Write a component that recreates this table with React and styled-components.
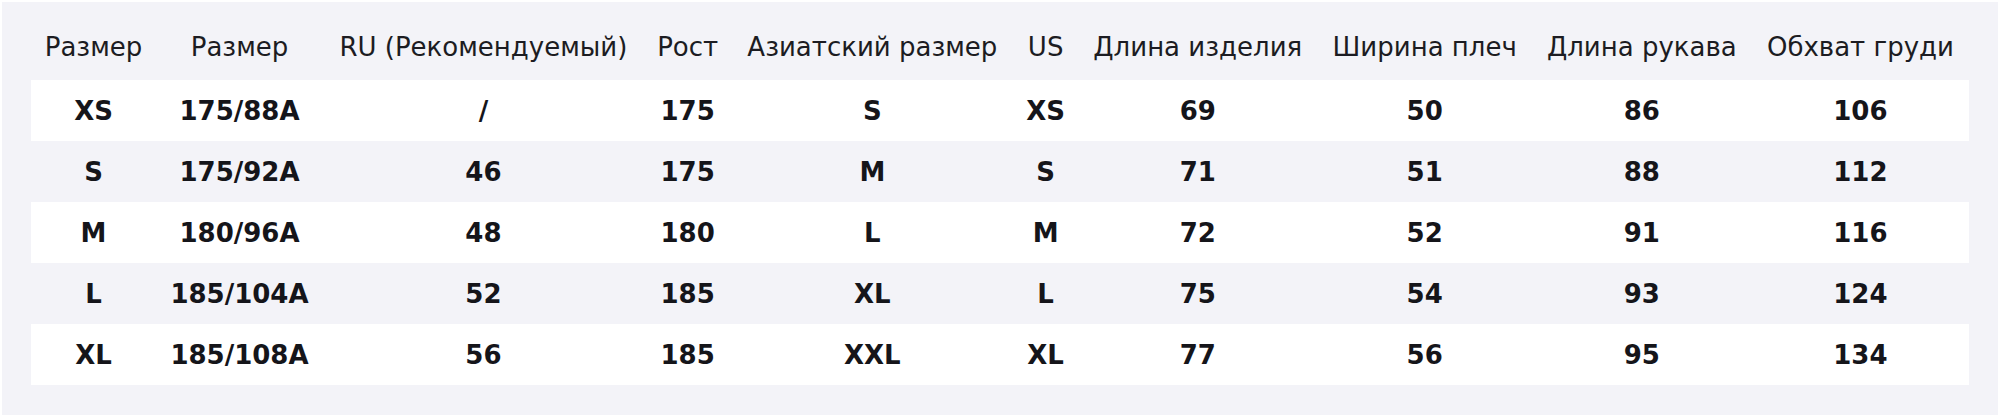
import React from "react";
import styled, { createGlobalStyle } from "styled-components";

const Global = createGlobalStyle`
  html, body { margin: 0; padding: 0; background: #ffffff; }
  body { font-family: "DejaVu Sans", Verdana, sans-serif; }
`;

const Panel = styled.div`
  margin: 2px;
  width: 1996px;
  height: 413px;
  box-sizing: border-box;
  background: #f3f3f8;
  padding: 0 29px 31px;
`;

const Table = styled.table`
  width: 100%;
  border-collapse: collapse;
  table-layout: auto;
`;

const HeadCell = styled.th`
  height: 78px;
  box-sizing: border-box;
  padding: 12px 12px 0;
  font-weight: 400;
  font-size: 26px;
  color: #1c1c22;
  text-align: center;
  white-space: nowrap;
  vertical-align: middle;
`;

const Row = styled.tr`
  background: ${(p) => (p.$striped ? "#ffffff" : "transparent")};
`;

const Cell = styled.td`
  height: 61px;
  padding: 0 12px;
  font-weight: 700;
  font-size: 26px;
  color: #15151a;
  text-align: center;
  white-space: nowrap;
  vertical-align: middle;
`;

const headers = [
  "Размер",
  "Размер",
  "RU (Рекомендуемый)",
  "Рост",
  "Азиатский размер",
  "US",
  "Длина изделия",
  "Ширина плеч",
  "Длина рукава",
  "Обхват груди",
];

const rows = [
  ["XS", "175/88A", "/", "175", "S", "XS", "69", "50", "86", "106"],
  ["S", "175/92A", "46", "175", "M", "S", "71", "51", "88", "112"],
  ["M", "180/96A", "48", "180", "L", "M", "72", "52", "91", "116"],
  ["L", "185/104A", "52", "185", "XL", "L", "75", "54", "93", "124"],
  ["XL", "185/108A", "56", "185", "XXL", "XL", "77", "56", "95", "134"],
];

export default function App() {
  return (
    <>
      <Global />
      <Panel>
        <Table>
          <thead>
            <tr>
              {headers.map((h, i) => (
                <HeadCell key={i}>{h}</HeadCell>
              ))}
            </tr>
          </thead>
          <tbody>
            {rows.map((r, i) => (
              <Row key={i} $striped={i % 2 === 0}>
                {r.map((c, j) => (
                  <Cell key={j}>{c}</Cell>
                ))}
              </Row>
            ))}
          </tbody>
        </Table>
      </Panel>
    </>
  );
}
